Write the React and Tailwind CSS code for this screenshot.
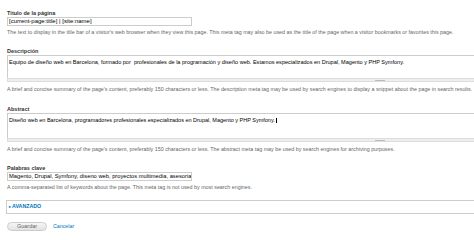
export default function App() {
  const helpCls = "text-[5.35px] leading-[6px] text-[#666] whitespace-nowrap";
  const labelCls = "block text-[5.5px] leading-[6px] font-bold text-[#333] mb-[1px] whitespace-nowrap";

  return (
    <div className="w-[474px] h-[240px] overflow-hidden bg-white pt-[10px] pl-[7px] font-['Liberation_Sans',Arial,sans-serif]">
      {/* Titulo */}
      <div>
        <label className={labelCls}>Título de la página</label>
        <div className="w-[185px] h-[9px] border border-[#ccc] px-[1px] text-[6px] leading-[7px] text-black whitespace-nowrap overflow-hidden">
          [current-page:title] | [site:name]
        </div>
        <p className={"mt-[3px] " + helpCls}>
          The text to display in the title bar of a visitor's web browser when they view this page. This meta tag may also be used as the title of the page when a visitor bookmarks or favorites this page.
        </p>
      </div>

      {/* Descripcion */}
      <div className="mt-[13px]">
        <label className={labelCls}>Descripción</label>
        <div className="w-[745px]">
          <div className="h-[23px] border border-[#ccc] border-b-0 px-[1px] pt-[3px] text-[5.55px] leading-[6px] text-black whitespace-nowrap">
            Equipo de diseño web en Barcelona, formado por&nbsp; profesionales de la programación y diseño web. Estamos especializados en Drupal, Magento y PHP Symfony.
          </div>
          <div className="h-[4px] bg-[#eee] border border-[#ddd] flex justify-center items-center">
            <div className="w-[10px] h-[1px] bg-[#bbb]" />
          </div>
        </div>
        <p className={"mt-[4px] " + helpCls}>
          A brief and concise summary of the page's content, preferably 150 characters or less. The description meta tag may be used by search engines to display a snippet about the page in search results.
        </p>
      </div>

      {/* Abstract */}
      <div className="mt-[14px]">
        <label className={labelCls}>Abstract</label>
        <div className="w-[745px]">
          <div className="h-[25px] border border-[#ccc] border-b-0 px-[1px] pt-[3px] text-[5.5px] leading-[6px] text-black font-medium whitespace-nowrap">
            Diseño web en Barcelona, programadores profesionales especializados en Drupal, Magento y PHP Symfony.
            <span className="inline-block w-[0.5px] h-[5px] bg-black align-middle ml-[1px]" />
          </div>
          <div className="h-[4px] bg-[#eee] border border-[#ddd] flex justify-center items-center">
            <div className="w-[10px] h-[1px] bg-[#bbb]" />
          </div>
        </div>
        <p className={"mt-[4px] " + helpCls}>
          A brief and concise summary of the page's content, preferably 150 characters or less. The abstract meta tag may be used by search engines for archiving purposes.
        </p>
      </div>

      {/* Palabras clave */}
      <div className="mt-[13px]">
        <label className={labelCls}>Palabras clave</label>
        <div className="w-[185px] h-[9px] border border-[#ccc] px-[1px] text-[5.75px] leading-[7px] text-black whitespace-nowrap overflow-hidden">
          Magento, Drupal, Symfony, diseno web, proyectos multimedia, asesoria
        </div>
        <p className={"mt-[3px] " + helpCls}>
          A comma-separated list of keywords about the page. This meta tag is not used by most search engines.
        </p>
      </div>

      {/* Avanzado */}
      <div className="mt-[10px] -ml-[1px] w-[745px] h-[14px] border border-[#ccc] flex items-center pl-[2px]">
        <span className="text-[5.3px] font-bold text-[#0074bd] whitespace-nowrap">
          <span className="text-[4px] mr-[1px]">▸</span>AVANZADO
        </span>
      </div>

      {/* Buttons */}
      <div className="mt-[8px] flex items-center gap-[6px]">
        <button className="w-[40px] h-[9px] rounded-[5px] border border-[#ccc] bg-gradient-to-b from-[#f6f6f6] to-[#e2e2e2] text-[5.5px] leading-[7px] text-[#666]">
          Guardar
        </button>
        <a href="#" className="text-[5.3px] text-[#0074bd]">Cancelar</a>
      </div>
    </div>
  );
}
